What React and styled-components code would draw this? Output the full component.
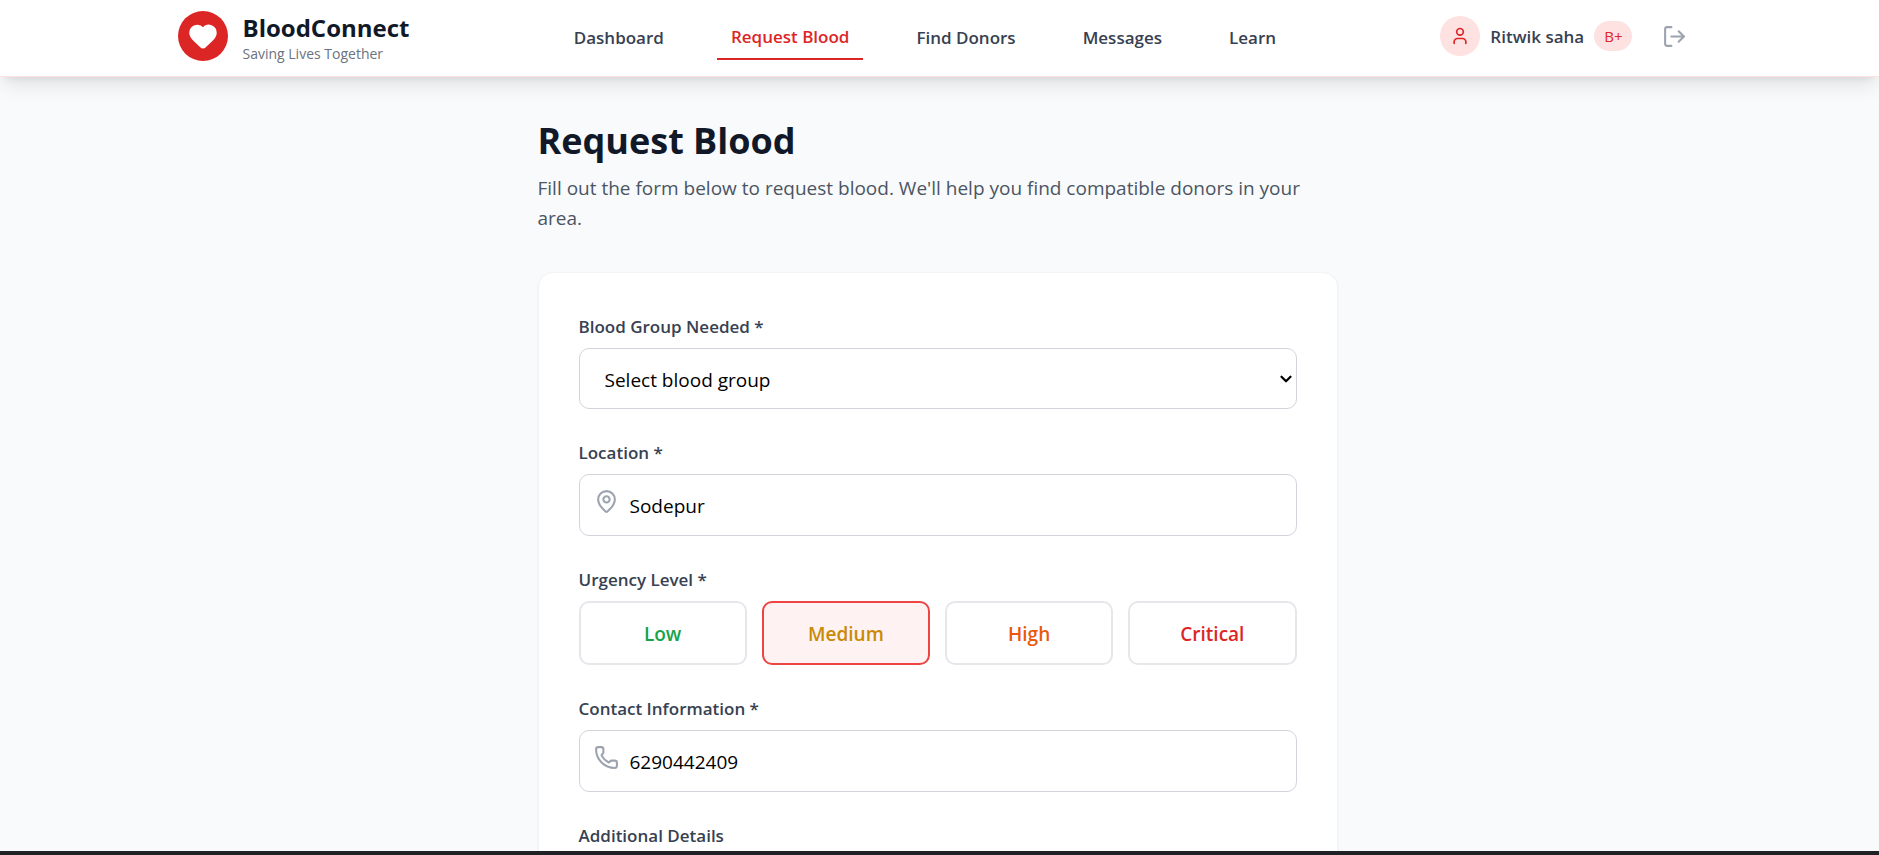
import React, { useState } from 'react'
import styled, { createGlobalStyle } from 'styled-components'
import { ChevronDown, Heart, LogOut, MapPin, Phone, User } from 'lucide-react'

const links = ['Dashboard', 'Request Blood', 'Find Donors', 'Messages', 'Learn']

const bloodGroups = ['A+', 'A-', 'B+', 'B-', 'AB+', 'AB-', 'O+', 'O-']

const urgencyLevels = [
  { label: 'Low', color: '#16a34a' },
  { label: 'Medium', color: '#ca8a04' },
  { label: 'High', color: '#ea580c' },
  { label: 'Critical', color: '#dc2626' },
]

function Navbar() {
  return (
    <Header>
      <HeaderInner>
        <Brand href="#home">
          <Logo>
            <Heart size={30} fill="currentColor" />
          </Logo>
          <BrandText>
            <BrandName>BloodConnect</BrandName>
            <Tagline>Saving Lives Together</Tagline>
          </BrandText>
        </Brand>
        <Nav>
          {links.map((link) => (
            <NavLink key={link} href="#nav" $active={link === 'Request Blood'}>
              {link}
            </NavLink>
          ))}
        </Nav>
        <Account>
          <Profile>
            <Avatar>
              <User size={20} />
            </Avatar>
            <UserName>Ritwik saha</UserName>
            <Badge>B+</Badge>
          </Profile>
          <LogoutButton type="button" aria-label="Log out">
            <LogOut size={25} />
          </LogoutButton>
        </Account>
      </HeaderInner>
    </Header>
  )
}

function RequestForm() {
  const [group, setGroup] = useState('')
  const [location, setLocation] = useState('Sodepur')
  const [urgency, setUrgency] = useState('Medium')
  const [contact, setContact] = useState('6290442409')

  return (
    <Card onSubmit={(e) => e.preventDefault()}>
      <Field>
        <Label htmlFor="group">Blood Group Needed *</Label>
        <SelectWrap>
          <Select id="group" value={group} onChange={(e) => setGroup(e.target.value)}>
            <option value="">Select blood group</option>
            {bloodGroups.map((g) => (
              <option key={g} value={g}>
                {g}
              </option>
            ))}
          </Select>
          <ChevronDown size={18} strokeWidth={3} />
        </SelectWrap>
      </Field>
      <Field>
        <Label htmlFor="location">Location *</Label>
        <InputWrap>
          <MapPin size={25} />
          <Input id="location" value={location} onChange={(e) => setLocation(e.target.value)} />
        </InputWrap>
      </Field>
      <Field>
        <Label as="span" id="urgency">
          Urgency Level *
        </Label>
        <Levels role="group" aria-labelledby="urgency">
          {urgencyLevels.map(({ label, color }) => (
            <LevelButton
              key={label}
              type="button"
              $color={color}
              $selected={urgency === label}
              onClick={() => setUrgency(label)}
            >
              {label}
            </LevelButton>
          ))}
        </Levels>
      </Field>
      <Field>
        <Label htmlFor="contact">Contact Information *</Label>
        <InputWrap>
          <Phone size={25} />
          <Input
            id="contact"
            type="tel"
            value={contact}
            onChange={(e) => setContact(e.target.value)}
          />
        </InputWrap>
      </Field>
      <Field>
        <Label htmlFor="details">Additional Details</Label>
        <TextArea id="details" rows={4} />
      </Field>
    </Card>
  )
}

function App() {
  return (
    <Page>
      <GlobalStyle />
      <Navbar />
      <Scroller>
        <Main>
          <Title>Request Blood</Title>
          <Intro>
            Fill out the form below to request blood. We'll help you find compatible donors in your
            area.
          </Intro>
          <RequestForm />
        </Main>
      </Scroller>
    </Page>
  )
}

export default App

const GlobalStyle = createGlobalStyle`
  *, *::before, *::after {
    box-sizing: border-box;
  }
  body {
    margin: 0;
    font-family: 'Segoe UI', 'Open Sans', 'Noto Sans', sans-serif;
    font-size: 19px;
    line-height: 30px;
    color: #111827;
    background: #f9fafb;
  }
  button, input, select, textarea {
    font: inherit;
  }
  svg {
    display: block;
  }
`

const Page = styled.div`
  display: flex;
  flex-direction: column;
  height: 100vh;
  border-bottom: 4px solid #202124;
`

const Header = styled.header`
  position: relative;
  z-index: 1;
  padding-right: 4px;
  background: #fff;
  border-bottom: 1px solid #fee2e2;
  box-shadow: 0 12px 19px -4px rgba(0, 0, 0, 0.1), 0 5px 8px -5px rgba(0, 0, 0, 0.1);
`

const HeaderInner = styled.div`
  display: flex;
  align-items: center;
  justify-content: space-between;
  max-width: 1600px;
  height: 76px;
  margin: 0 auto;
  padding: 0 40px 4px;
`

const Brand = styled.a`
  display: flex;
  align-items: center;
  gap: 15px;
  color: inherit;
  text-decoration: none;
`

const Logo = styled.span`
  display: grid;
  place-items: center;
  width: 50px;
  height: 50px;
  border-radius: 50%;
  background: #dc2626;
  color: #fff;
`

const BrandText = styled.div`
  padding-top: 3px;
`

const BrandName = styled.div`
  font-size: 24px;
  font-weight: 700;
  line-height: 32px;
`

const Tagline = styled.div`
  font-size: 14px;
  line-height: 20px;
  color: #6b7280;
`

const Nav = styled.nav`
  display: flex;
  align-items: center;
  gap: 39px;
`

const NavLink = styled.a`
  padding: 11px 14px 9px;
  border-bottom: ${({ $active }) => ($active ? '2px solid #dc2626' : '0')};
  font-size: 17px;
  font-weight: 600;
  line-height: 25px;
  color: ${({ $active }) => ($active ? '#dc2626' : '#374151')};
  text-decoration: none;
`

const Account = styled.div`
  display: flex;
  align-items: center;
  gap: 20px;
`

const Profile = styled.div`
  display: flex;
  align-items: center;
  gap: 10px;
`

const Avatar = styled.span`
  display: grid;
  place-items: center;
  width: 40px;
  height: 40px;
  border-radius: 50%;
  background: #fee2e2;
  color: #dc2626;
`

const UserName = styled.span`
  padding-top: 2px;
  font-size: 17px;
  font-weight: 600;
  color: #374151;
`

const Badge = styled.span`
  padding: 5px 10px;
  border-radius: 15px;
  background: #fee2e2;
  font-size: 15px;
  line-height: 20px;
  color: #dc2626;
`

const LogoutButton = styled.button`
  padding: 10px;
  border: 0;
  background: none;
  color: #9ca3af;
  cursor: pointer;
`

const Scroller = styled.div`
  flex: 1;
  min-height: 0;
  padding-right: 4px;
  overflow: hidden;
`

const Main = styled.main`
  max-width: 800px;
  margin: 0 auto;
  padding-top: 41px;
`

const Title = styled.h1`
  margin: 0 0 10px;
  font-size: 36px;
  font-weight: 700;
  line-height: 45px;
`

const Intro = styled.p`
  margin: 0 0 39px;
  color: #4b5563;
`

const Card = styled.form`
  padding: 40px;
  border: 1px solid #f3f4f6;
  border-radius: 15px;
  background: #fff;
  box-shadow: 0 1px 3px rgba(0, 0, 0, 0.05);
`

const Field = styled.div`
  margin-bottom: 30px;
`

const Label = styled.label`
  display: block;
  padding: 1px 0 9px;
  font-size: 17px;
  font-weight: 600;
  line-height: 25px;
  color: #374151;
`

const SelectWrap = styled.div`
  display: grid;
  align-items: center;

  > * {
    grid-area: 1 / 1;
  }

  svg {
    justify-self: end;
    margin-right: 2px;
    pointer-events: none;
    color: #000;
  }
`

const Select = styled.select`
  width: 100%;
  height: 61px;
  padding: 2px 25px 0;
  border: 1px solid #d1d5db;
  border-radius: 10px;
  background: #fff;
  color: #000;
  appearance: none;
`

const InputWrap = styled.div`
  position: relative;

  svg {
    position: absolute;
    top: 15px;
    left: 15px;
    color: #9ca3af;
  }
`

const Input = styled.input`
  display: block;
  width: 100%;
  height: 62px;
  padding: 2px 20px 0 50px;
  border: 1px solid #d1d5db;
  border-radius: 10px;
  background: #fff;
  color: #000;
`

const Levels = styled.div`
  display: grid;
  grid-template-columns: repeat(4, 1fr);
  gap: 15px;
`

const LevelButton = styled.button`
  padding: 16px 15px 14px;
  border: 2px solid ${({ $selected }) => ($selected ? '#ef4444' : '#e5e7eb')};
  border-radius: 10px;
  background: ${({ $selected }) => ($selected ? '#fef2f2' : '#fff')};
  font-weight: 600;
  color: ${({ $color }) => $color};
  cursor: pointer;
`

const TextArea = styled.textarea`
  display: block;
  width: 100%;
  padding: 15px 20px;
  border: 1px solid #d1d5db;
  border-radius: 10px;
  resize: none;
`
